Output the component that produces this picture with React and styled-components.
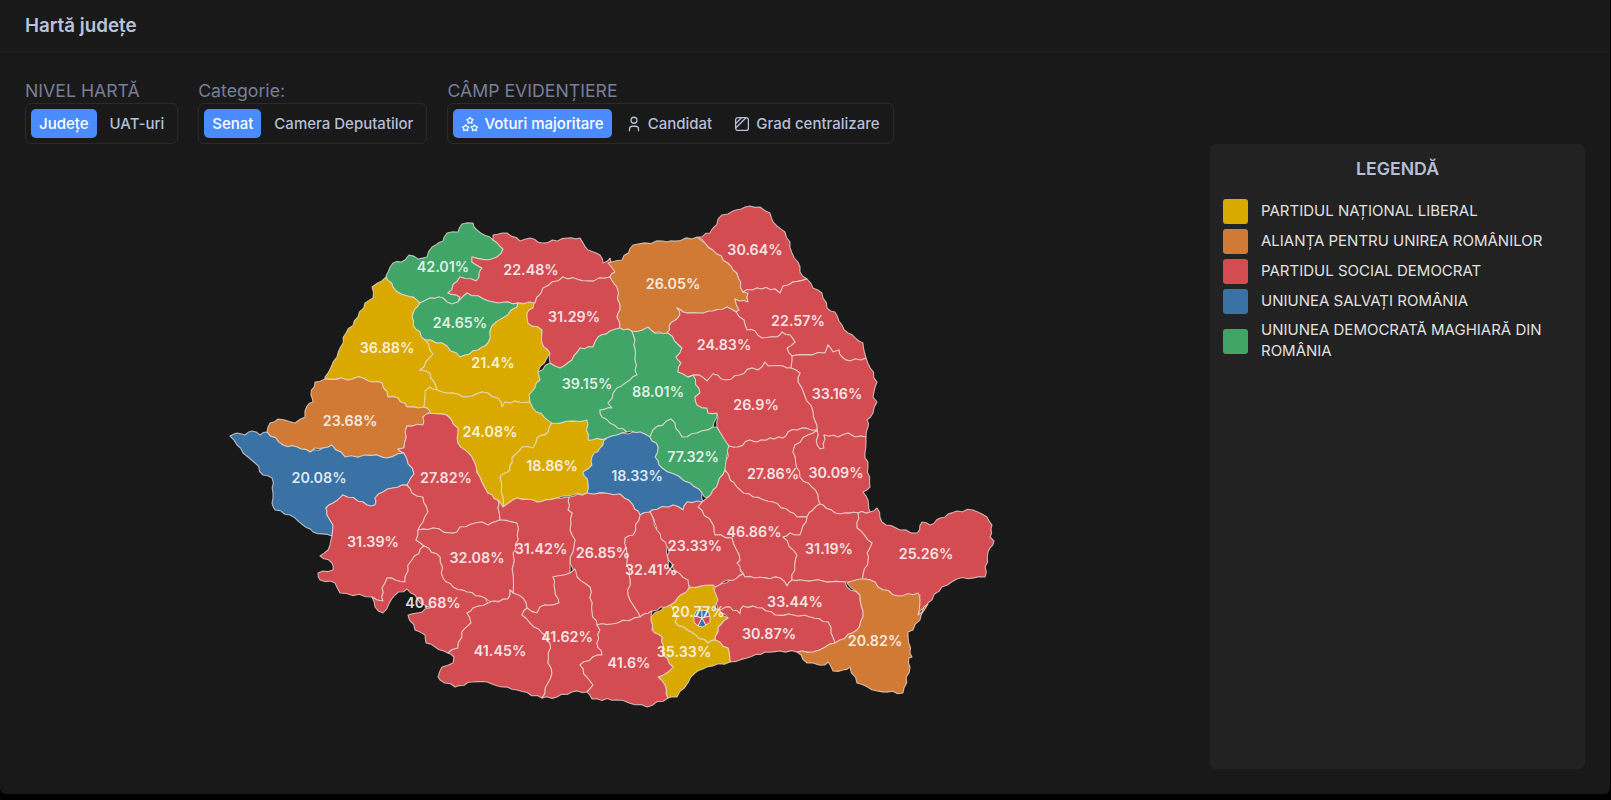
import styled, { createGlobalStyle } from "styled-components";
import { TbStars, TbUser } from "react-icons/tb";

const colors = {
    pnl: "#d9a900",
    aur: "#d07a36",
    psd: "#d24c52",
    usr: "#3a72a6",
    udmr: "#41a568",
};

const parties = [
    { key: "pnl", name: "PARTIDUL NAȚIONAL LIBERAL" },
    { key: "aur", name: "ALIANȚA PENTRU UNIREA ROMÂNILOR" },
    { key: "psd", name: "PARTIDUL SOCIAL DEMOCRAT" },
    { key: "usr", name: "UNIUNEA SALVAȚI ROMÂNIA" },
    { key: "udmr", name: "UNIUNEA DEMOCRATĂ MAGHIARĂ DIN ROMÂNIA" },
];

/* page coordinates, the svg viewBox starts where the map column starts */
const counties = [
    { party: "udmr", pts: "386,276 393,263 405,260 409,255 418,259 427,257 432,247 443,241 447,233 458,232 462,224 473,223 477,230 493,240 503,249 497,257 488,260 472,257 472,262 482,268 476,281 460,277 448,293 460,297 458,302 452,304 443,298 430,298 420,303 413,297 401,294 393,287" },
    { party: "psd", pts: "493,235 507,233 520,241 530,238 543,243 567,238 580,238 588,250 600,255 603,263 610,258 615,272 610,277 588,281 563,277 543,288 535,303 518,303 493,302 467,293 458,302 460,297 448,293 460,277 476,281 482,268 472,262 472,257 488,260 497,257 503,249 493,240" },
    { party: "udmr", pts: "420,303 430,298 443,298 452,304 458,302 467,293 493,302 518,303 517,307 492,326 488,343 478,350 460,357 442,343 425,340 413,325 413,313" },
    { party: "pnl", pts: "386,277 393,287 401,294 413,297 420,303 413,313 413,325 425,340 433,354 420,370 430,373 437,390 427,391 424,407 407,407 398,398 388,397 382,383 373,382 360,377 353,379 325,379 325,377 337,357 346,333 358,317 365,303 373,298 372,287" },
    { party: "pnl", pts: "518,303 534,303 533,308 527,313 528,323 542,330 542,343 550,353 538,372 540,380 529,395 530,402 505,402 502,407 498,398 482,392 467,397 453,393 442,392 437,390 430,373 420,370 433,354 425,340 442,343 460,357 478,350 488,343 492,326 517,307" },
    { party: "psd", pts: "535,303 543,288 563,277 588,281 610,277 617,287 620,310 617,317 620,328 610,331 598,337 593,347 580,348 572,360 560,368 550,363 550,353 542,343 542,330 528,323 527,313 533,308 534,303" },
    { party: "aur", pts: "315,382 325,379 353,379 360,377 373,382 382,383 388,397 398,398 407,407 424,407 430,411 423,417 423,425 407,426 404,448 398,449 404,453 387,458 377,455 357,457 345,457 332,445 323,448 315,448 310,452 297,447 283,445 267,432 270,423 278,419 295,423 305,417 307,406 313,402 311,395" },
    { party: "usr", pts: "230,436 237,433 245,435 252,431 260,435 267,432 283,445 297,447 310,452 323,448 332,445 345,457 377,455 387,458 404,453 414,474 407,485 393,488 383,492 375,498 375,505 367,505 363,502 343,495 333,503 326,508 327,515 333,525 332,536 313,532 303,525 290,515 275,510 272,503 273,493 272,478 263,475 255,463 248,457 243,453 237,445" },
    { party: "psd", pts: "343,495 363,502 367,505 375,505 375,498 383,492 393,488 407,485 412,493 423,497 428,512 423,522 418,530 416,540 424,546 412,560 408,565 405,582 387,578 382,588 383,601 372,597 340,593 335,583 320,580 318,573 333,570 332,563 320,556 328,550 332,536 333,525 327,515 326,508 333,503" },
    { party: "psd", pts: "423,417 430,413 447,415 458,428 458,443 472,457 480,477 488,493 498,500 498,508 500,520 488,525 482,522 460,527 457,532 450,533 433,528 418,530 423,522 428,512 423,497 412,493 407,485 414,474 404,453 398,449 404,448 407,426 423,425" },
    { party: "pnl", pts: "425,391 430,387 437,390 442,392 453,393 467,397 482,392 498,398 502,407 505,402 530,402 533,408 552,422 548,432 537,438 533,448 522,447 512,458 510,470 500,477 503,497 503,507 498,500 488,493 480,477 472,457 458,443 458,428 447,415 430,413 430,411 424,407" },
    { party: "pnl", pts: "552,423 587,420 588,440 607,438 600,450 592,457 592,465 583,472 588,483 587,493 573,495 557,498 540,502 533,500 517,498 503,507 503,497 500,477 510,470 512,458 522,447 533,448 537,438 548,432" },
    { party: "udmr", pts: "550,363 560,368 572,360 580,348 593,347 598,337 610,331 620,328 632,331 635,340 635,360 637,375 630,380 617,388 608,403 612,408 600,410 602,417 610,423 627,432 617,435 607,438 588,440 587,420 552,423 533,408 530,402 529,395 540,380 538,372" },
    { party: "udmr", pts: "632,331 642,330 648,327 655,333 668,333 682,348 676,357 681,363 678,372 688,377 693,375 700,393 695,397 697,405 707,408 708,413 717,413 713,427 697,433 682,437 671,419 653,430 650,437 640,432 627,432 610,423 602,417 600,410 612,408 608,403 617,388 630,380 637,375 635,360 635,340" },
    { party: "udmr", pts: "650,437 653,430 671,419 682,437 697,433 713,427 717,427 723,437 729,447 725,470 718,483 713,490 707,498 702,493 690,483 662,468 655,457 658,447" },
    { party: "usr", pts: "600,448 607,438 617,435 633,432 640,432 650,437 658,447 655,457 662,468 690,483 702,493 703,502 687,502 683,510 673,505 652,510 640,515 633,505 620,494 587,493 588,483 583,472 592,465 592,457" },
    { party: "aur", pts: "610,277 615,272 608,263 622,260 633,245 663,241 675,241 697,237 713,250 728,263 737,273 743,292 748,293 748,302 735,299 739,310 736,312 727,307 713,311 698,313 683,312 677,308 680,315 672,322 667,333 655,333 648,327 642,330 632,331 620,328 617,317 620,310 617,287" },
    { party: "psd", pts: "698,237 710,233 722,215 733,211 745,207 760,207 770,213 773,222 785,232 790,242 792,253 798,262 800,272 807,279 793,282 783,286 780,293 775,289 757,288 743,292 737,273 728,263 713,250" },
    { party: "psd", pts: "743,292 757,288 775,289 780,293 783,286 793,282 807,279 813,288 822,293 827,308 835,312 842,325 848,333 863,343 866,358 850,361 842,357 839,350 833,352 828,345 825,353 792,356 787,348 795,342 790,335 782,332 777,337 762,338 755,331 747,330 744,320 736,312 739,310 735,299 748,302 748,293" },
    { party: "psd", pts: "667,333 672,322 680,315 677,308 683,312 698,313 713,311 727,307 736,312 744,320 747,330 755,331 762,338 777,337 782,332 790,335 795,342 787,348 792,356 791,368 783,366 768,366 765,362 758,370 752,368 740,375 726,380 713,374 707,381 699,375 688,377 678,372 681,363 676,357 682,348 668,333" },
    { party: "psd", pts: "792,356 825,353 828,345 833,352 839,350 842,357 850,361 866,358 877,382 873,397 877,402 873,413 867,420 868,427 866,437 855,437 848,433 838,437 824,435 824,448 820,449 817,445 817,430 813,412 798,382 800,373 791,368" },
    { party: "psd", pts: "699,375 707,381 713,374 726,380 740,375 752,368 758,370 765,362 768,366 783,366 791,368 800,373 798,382 813,412 817,430 802,428 788,432 783,438 770,438 757,442 750,440 738,447 729,446 723,437 717,427 717,413 708,413 707,408 697,405 695,397 700,393 693,375 688,377" },
    { party: "psd", pts: "729,446 738,447 750,440 757,442 770,438 783,438 788,432 802,428 817,430 808,435 795,445 793,452 800,477 812,487 818,495 820,504 813,510 807,517 797,517 790,512 773,502 753,497 740,490 730,480 725,470" },
    { party: "psd", pts: "795,445 808,435 817,430 817,445 820,449 824,448 824,435 838,437 848,433 855,437 866,437 865,453 868,467 870,487 863,492 868,500 870,512 858,513 845,513 835,513 823,505 820,504 818,495 812,487 800,477 793,452" },
    { party: "psd", pts: "877,508 882,522 900,530 917,533 922,522 930,525 940,518 957,511 973,510 987,517 992,525 990,537 994,541 988,552 985,577 957,579 942,587 928,603 918,615 920,595 898,596 878,587 875,582 865,579 860,583 868,560 867,553 872,543 857,528 858,513 870,512" },
    { party: "psd", pts: "730,480 740,490 753,497 773,502 790,512 797,517 807,517 800,535 790,533 783,537 797,555 792,580 787,586 780,578 755,578 745,577 737,563 740,560 732,538 715,535 712,523 698,507 702,502 707,498 713,490 718,483 725,470" },
    { party: "psd", pts: "820,504 823,505 835,513 845,513 858,513 857,528 872,543 867,553 868,560 860,583 845,582 800,580 792,580 797,555 783,537 790,533 800,535 807,517 813,510" },
    { party: "psd", pts: "715,587 743,574 745,577 755,578 780,578 787,586 792,580 800,580 845,582 847,587 860,595 863,617 857,630 840,640 835,643 828,622 810,617 793,615 775,615 762,608 743,606 740,614 730,607 718,610 715,600" },
    { party: "psd", pts: "718,610 730,607 740,614 743,606 762,608 775,615 793,615 810,617 828,622 835,643 813,652 797,652 780,651 765,652 747,658 730,662 728,648 715,640 718,627 728,618" },
    { party: "aur", pts: "847,583 860,579 865,579 875,582 878,587 898,596 918,593 920,600 918,615 928,604 913,630 908,632 910,653 912,657 909,658 910,667 903,693 877,691 857,683 850,667 843,670 833,671 828,662 825,665 807,663 797,652 813,652 835,643 840,640 857,630 863,617 860,595" },
    { party: "pnl", pts: "670,605 690,587 713,585 718,600 715,608 728,618 718,627 715,640 708,643 687,630 675,622 677,617" },
    { party: "pnl", pts: "651,617 665,606 670,605 677,617 675,622 687,630 708,643 715,640 728,648 730,662 707,667 695,673 677,697 668,698 665,685 658,677 668,672 673,667 663,655 662,637 652,630" },
    { party: "psd", pts: "652,510 673,505 683,510 687,502 702,502 698,507 712,523 715,535 732,538 740,560 737,563 743,574 737,578 723,582 715,587 713,585 690,587 687,580 677,572 668,560 668,548 658,538 655,523 650,512" },
    { party: "psd", pts: "640,515 650,512 657,530 667,547 668,567 688,580 689,588 670,605 652,611 640,617 633,605 628,595 630,580 627,560 625,538 633,535" },
    { party: "psd", pts: "569,497 587,493 620,494 633,505 640,515 633,535 625,538 627,560 630,580 628,595 633,605 640,617 612,624 597,625 592,613 590,587 577,577 573,569 570,563 575,540 570,530 572,513 568,510" },
    { party: "psd", pts: "503,507 517,498 533,500 540,502 557,498 569,497 568,510 572,513 570,530 575,540 570,563 570,573 553,577 555,590 559,603 540,607 537,613 527,608 523,598 513,593 513,553 518,540 517,523 500,520 498,508 498,500" },
    { party: "psd", pts: "416,540 418,530 433,528 450,533 457,532 460,527 482,522 488,525 500,520 517,523 518,540 513,553 513,593 510,590 508,599 490,602 485,598 467,592 453,587 443,578 440,557 424,546" },
    { party: "psd", pts: "424,546 440,557 443,578 453,587 467,592 485,598 488,603 473,608 467,613 471,623 462,632 458,648 448,653 435,647 426,643 425,635 415,630 408,615 417,613 430,608 420,603 415,595 407,589 395,595 383,613 375,607 372,597 383,601 382,588 387,578 405,582 408,565 412,560" },
    { party: "psd", pts: "488,603 508,599 510,590 513,593 523,598 527,608 522,615 530,623 542,633 550,643 548,663 552,673 548,683 542,698 517,690 502,687 487,682 473,682 455,687 440,680 438,677 442,667 453,663 454,657 448,653 458,648 462,632 471,623 467,613 473,608" },
    { party: "psd", pts: "522,615 527,608 537,613 540,607 559,603 555,590 553,577 570,573 575,569 577,577 590,587 592,613 597,625 600,630 597,643 602,655 593,657 580,665 587,677 593,685 587,692 572,692 557,697 542,698 548,683 552,673 548,663 550,643 542,633 530,623" },
    { party: "psd", pts: "597,625 612,624 640,617 652,611 651,617 652,630 662,637 663,655 673,667 668,672 658,677 665,685 668,698 647,707 617,700 592,699 587,692 593,685 587,677 580,665 593,657 602,655 597,643 600,630" },
];

const bucharest = [
    { party: "usr", pts: "702,618 702,610 696,611 694,616" },
    { party: "usr", pts: "702,618 702,610 708,611 710,616" },
    { party: "psd", pts: "702,618 694,616 694,622 698,626" },
    { party: "usr", pts: "702,618 698,626 703,627 706,625" },
    { party: "psd", pts: "702,618 706,625 710,622 710,616" },
];

const labels = [
    { text: "42.01%", x: 443, y: 266 },
    { text: "22.48%", x: 531, y: 269 },
    { text: "24.65%", x: 460, y: 322 },
    { text: "31.29%", x: 574, y: 316 },
    { text: "36.88%", x: 387, y: 347 },
    { text: "21.4%", x: 493, y: 362 },
    { text: "39.15%", x: 587, y: 383 },
    { text: "23.68%", x: 350, y: 420 },
    { text: "24.08%", x: 490, y: 431 },
    { text: "18.86%", x: 552, y: 465 },
    { text: "20.08%", x: 319, y: 477 },
    { text: "27.82%", x: 446, y: 477 },
    { text: "30.64%", x: 755, y: 249 },
    { text: "26.05%", x: 673, y: 283 },
    { text: "22.57%", x: 798, y: 320 },
    { text: "24.83%", x: 724, y: 344 },
    { text: "88.01%", x: 658, y: 391 },
    { text: "26.9%", x: 756, y: 404 },
    { text: "33.16%", x: 837, y: 393 },
    { text: "77.32%", x: 693, y: 456 },
    { text: "18.33%", x: 637, y: 475 },
    { text: "27.86%", x: 773, y: 473 },
    { text: "30.09%", x: 836, y: 472 },
    { text: "31.39%", x: 373, y: 541 },
    { text: "32.08%", x: 477, y: 557 },
    { text: "31.42%", x: 541, y: 548 },
    { text: "26.85%", x: 603, y: 552 },
    { text: "32.41%", x: 651, y: 569 },
    { text: "40.68%", x: 433, y: 602 },
    { text: "41.45%", x: 500, y: 650 },
    { text: "41.62%", x: 567, y: 636 },
    { text: "41.6%", x: 629, y: 662 },
    { text: "23.33%", x: 695, y: 545 },
    { text: "46.86%", x: 754, y: 531 },
    { text: "31.19%", x: 829, y: 548 },
    { text: "25.26%", x: 926, y: 553 },
    { text: "20.77%", x: 698, y: 611 },
    { text: "33.44%", x: 795, y: 601 },
    { text: "30.87%", x: 769, y: 633 },
    { text: "35.33%", x: 684, y: 651 },
    { text: "20.82%", x: 875, y: 640 },
];

// borders in the real map are bumpy, shared edges get the same bumps so no gaps open
function roughen(pts) {
    const list = pts.split(" ").map(p => p.split(",").map(Number));
    const out = [];

    list.forEach((a, i) => {
        const b = list[(i + 1) % list.length];
        out.push(a);

        const len = Math.hypot(b[0] - a[0], b[1] - a[1]);
        if (len < 7) return;

        const flip = a[0] < b[0] || (a[0] === b[0] && a[1] < b[1]);
        const [p, q] = flip ? [a, b] : [b, a];
        const seed = p[0] * 7 + p[1] * 13 + q[0] * 17 + q[1] * 23;
        const steps = Math.min(4, Math.floor(len / 6));
        const mid = [];

        for (let s = 1; s <= steps; s++) {
            const t = s / (steps + 1);
            const off = Math.sin(seed + s * 2.4) * 1.1;
            mid.push([
                p[0] + (q[0] - p[0]) * t - ((q[1] - p[1]) / len) * off,
                p[1] + (q[1] - p[1]) * t + ((q[0] - p[0]) / len) * off,
            ]);
        }
        out.push(...(flip ? mid : mid.reverse()));
    });

    return out.map(p => `${p[0].toFixed(1)},${p[1].toFixed(1)}`).join(" ");
}

function GradeIcon() {
    return (
        <svg width="18" height="18" viewBox="0 0 24 24" fill="none" stroke="currentColor" strokeWidth="1.7" strokeLinecap="round" strokeLinejoin="round">
            <rect x="3.5" y="3.5" width="17" height="17" rx="3" />
            <path d="M4 17L17 4" />
            <path d="M4 11L11 4" />
        </svg>
    );
}

export default function App() {
    return (
        <>
            <GlobalStyle />
            <Shell>
                <Header>
                    <Title>Hartă județe</Title>
                </Header>

                <Controls>
                    <Group>
                        <GroupLabel>NIVEL HARTĂ</GroupLabel>
                        <Segmented>
                            <Segment $active>Județe</Segment>
                            <Segment>UAT-uri</Segment>
                        </Segmented>
                    </Group>
                    <Group>
                        <GroupLabel>Categorie:</GroupLabel>
                        <Segmented>
                            <Segment $active>Senat</Segment>
                            <Segment>Camera Deputatilor</Segment>
                        </Segmented>
                    </Group>
                    <Group>
                        <GroupLabel>CÂMP EVIDENȚIERE</GroupLabel>
                        <Segmented>
                            <Segment $active><TbStars size={18} strokeWidth={1.5} />Voturi majoritare</Segment>
                            <Segment><TbUser size={18} strokeWidth={1.7} />Candidat</Segment>
                            <Segment><GradeIcon />Grad centralizare</Segment>
                        </Segmented>
                    </Group>
                </Controls>

                <Content>
                    <MapArea>
                        <MapSvg viewBox="25 144 1185 625">
                            {counties.map((county, i) => (
                                <County key={i} points={roughen(county.pts)} $fill={colors[county.party]} />
                            ))}
                            {bucharest.map((sector, i) => (
                                <Sector key={i} points={sector.pts} $fill={colors[sector.party]} />
                            ))}
                            {labels.map(label => (
                                <Percent key={label.text} x={label.x} y={label.y}>{label.text}</Percent>
                            ))}
                        </MapSvg>
                    </MapArea>

                    <Legend>
                        <LegendTitle>LEGENDĂ</LegendTitle>
                        <LegendList>
                            {parties.map(party => (
                                <LegendRow key={party.key}>
                                    <Swatch $fill={colors[party.key]} />
                                    <LegendText>{party.name}</LegendText>
                                </LegendRow>
                            ))}
                        </LegendList>
                    </Legend>
                </Content>
            </Shell>
        </>
    );
}

const GlobalStyle = createGlobalStyle`
    html, body {
        margin: 0;
        padding: 0;
        background-color: #000;
    }
    body {
        font-family: Inter, "Liberation Sans", sans-serif;
    }
`;

const Shell = styled.div`
    width: 1610px;
    height: 794px;
    background-color: #191919;
    border-radius: 0 0 6px 6px;
    display: flex;
    flex-direction: column;
    overflow: hidden;
`;

const Header = styled.header`
    height: 52px;
    flex: none;
    box-sizing: border-box;
    display: flex;
    align-items: center;
    padding-left: 25px;
    border-bottom: 1px solid #1e2135;
`;

const Title = styled.h1`
    margin: 0;
    font-size: 18.8px;
    font-weight: 600;
    color: #b9c3dc;
`;

const Controls = styled.div`
    height: 92px;
    flex: none;
    box-sizing: border-box;
    display: flex;
    align-items: flex-end;
    gap: 20px;
    padding-left: 25px;
`;

const Group = styled.div`
    display: flex;
    flex-direction: column;
`;

const GroupLabel = styled.span`
    font-size: 17.7px;
    line-height: 24px;
    color: #787e98;
`;

const Segmented = styled.div`
    box-sizing: border-box;
    height: 41px;
    display: flex;
    align-items: center;
    gap: 5px;
    padding: 0 5px;
    border: 1px solid #2a2a2a;
    border-radius: 6px;
`;

const Segment = styled.div`
    height: 29px;
    box-sizing: border-box;
    display: flex;
    align-items: center;
    gap: 5px;
    padding: 0 8px;
    border-radius: 5px;
    font-size: 15px;
    font-weight: 500;
    color: ${({ $active }) => ($active ? "#fff" : "#b4bfd8")};
    background-color: ${({ $active }) => ($active ? "#4a8cff" : "transparent")};
`;

const Content = styled.div`
    flex: 1;
    display: flex;
    padding-left: 25px;
    padding-right: 25px;
    padding-bottom: 25px;
    min-height: 0;
`;

const MapArea = styled.div`
    width: 1185px;
    flex: none;
`;

const MapSvg = styled.svg`
    display: block;
    width: 100%;
    height: 100%;
`;

const County = styled.polygon`
    fill: ${({ $fill }) => $fill};
    stroke: #efe4dd;
    stroke-opacity: 0.72;
    stroke-width: 1.1;
    stroke-linejoin: round;
`;

const Sector = styled(County)`
    stroke: #fff;
    stroke-opacity: 0.9;
    stroke-width: 0.8;
`;

const Percent = styled.text`
    font-family: Inter, "Liberation Sans", sans-serif;
    font-size: 14.3px;
    font-weight: 600;
    fill: #fff;
    fill-opacity: 0.85;
    text-anchor: middle;
    dominant-baseline: central;
`;

const Legend = styled.aside`
    width: 375px;
    flex: none;
    box-sizing: border-box;
    background-color: #222;
    border-radius: 6px;
    padding: 15px 13px;
`;

const LegendTitle = styled.h2`
    margin: 0 0 20px;
    font-size: 17.7px;
    line-height: 20px;
    font-weight: 600;
    text-align: center;
    color: #b4bfd8;
`;

const LegendList = styled.div`
    display: flex;
    flex-direction: column;
    gap: 5px;
`;

const LegendRow = styled.div`
    display: flex;
    align-items: center;
    gap: 13px;
    min-height: 25px;
`;

const Swatch = styled.div`
    width: 25px;
    height: 25px;
    flex: none;
    border-radius: 3px;
    background-color: ${({ $fill }) => $fill};
`;

const LegendText = styled.span`
    flex: 1;
    font-size: 15px;
    line-height: 21px;
    padding-bottom: 2px;
    color: #e0e0e0;
`;
